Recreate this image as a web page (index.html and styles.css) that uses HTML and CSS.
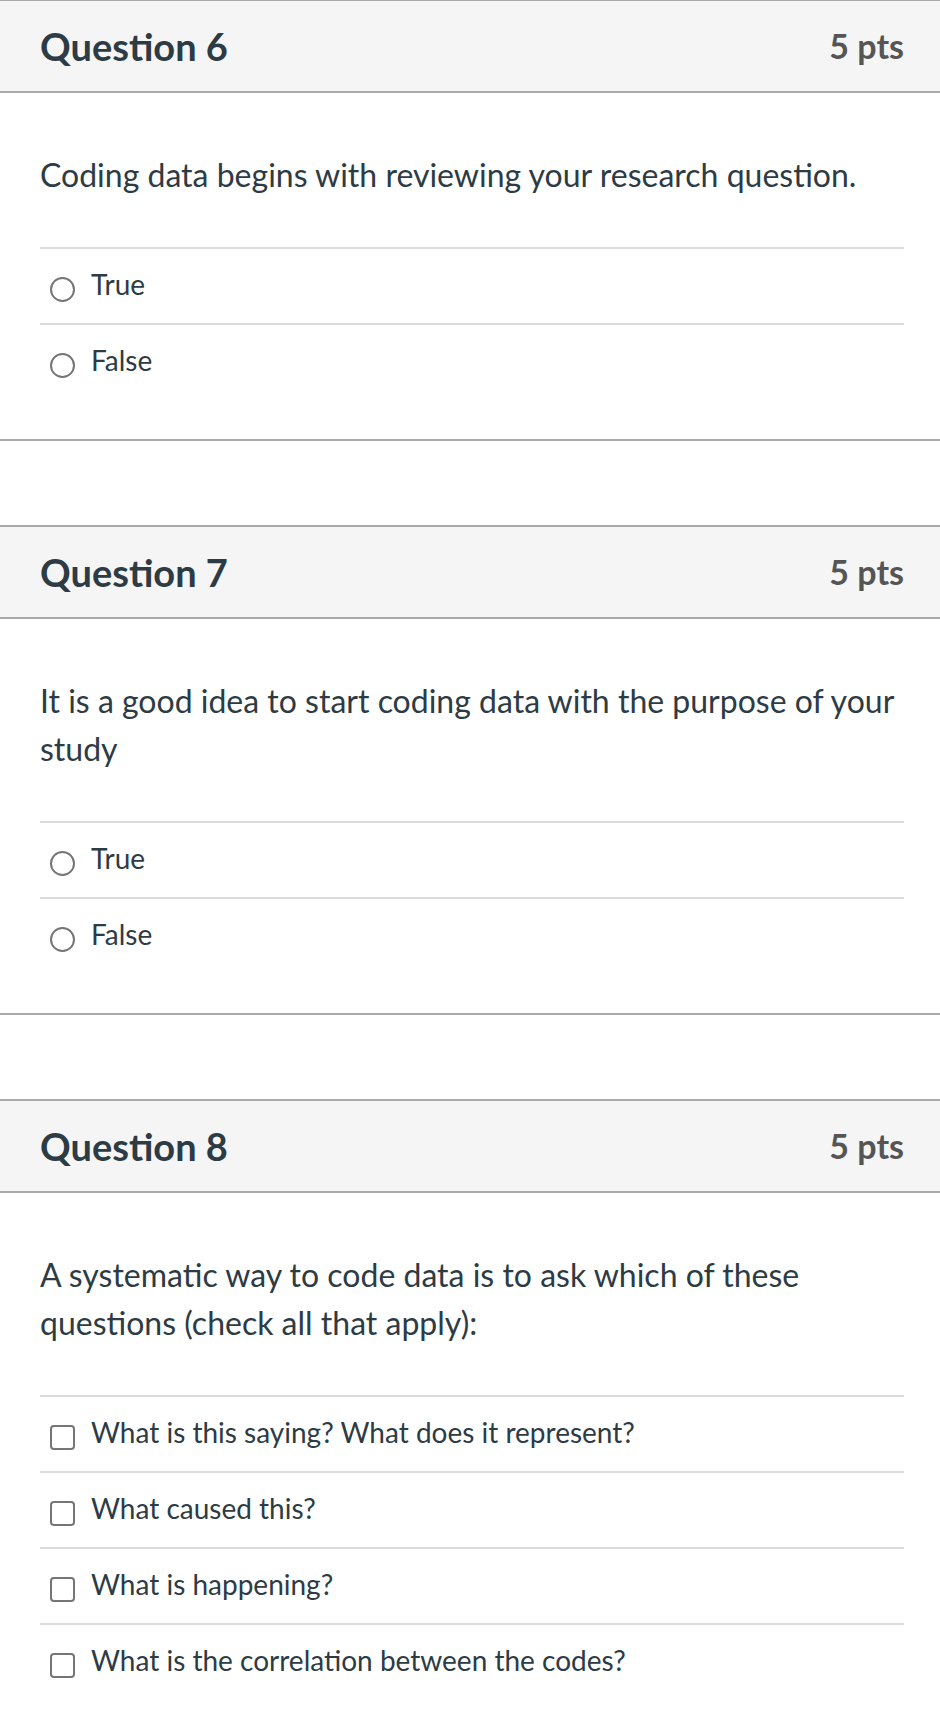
FILE: index.html
```html
<!DOCTYPE html>
<html lang="en">
<head>
<meta charset="utf-8">
<title>Quiz</title>
<link rel="stylesheet" href="styles.css">
</head>
<body>
<main class="quiz">
  <section class="question">
    <header class="q-header">
      <h2 class="q-title">Question 6</h2>
      <span class="q-points">5 pts</span>
    </header>
    <div class="q-body">
      <p class="q-text">Coding data begins with reviewing your research question.</p>
      <ul class="answers">
        <li class="answer"><span class="radio"></span><span class="label">True</span></li>
        <li class="answer"><span class="radio"></span><span class="label">False</span></li>
      </ul>
    </div>
  </section>
  <section class="question">
    <header class="q-header">
      <h2 class="q-title">Question 7</h2>
      <span class="q-points">5 pts</span>
    </header>
    <div class="q-body">
      <p class="q-text">It is a good idea to start coding data with the purpose of your study</p>
      <ul class="answers">
        <li class="answer"><span class="radio"></span><span class="label">True</span></li>
        <li class="answer"><span class="radio"></span><span class="label">False</span></li>
      </ul>
    </div>
  </section>
  <section class="question">
    <header class="q-header">
      <h2 class="q-title">Question 8</h2>
      <span class="q-points">5 pts</span>
    </header>
    <div class="q-body">
      <p class="q-text">A systematic way to code data is to ask which of these questions (check all that apply):</p>
      <ul class="answers">
        <li class="answer"><span class="checkbox"></span><span class="label">What is this saying? What does it represent?</span></li>
        <li class="answer"><span class="checkbox"></span><span class="label">What caused this?</span></li>
        <li class="answer"><span class="checkbox"></span><span class="label">What is happening?</span></li>
        <li class="answer"><span class="checkbox"></span><span class="label">What is the correlation between the codes?</span></li>
      </ul>
    </div>
  </section>
</main>
</body>
</html>
```
FILE: styles.css
```css
html, body {
  margin: 0;
  padding: 0;
  background: #ffffff;
}
body {
  font-family: Lato, "Open Sans", "Liberation Sans", sans-serif;
  color: #2d3b45;
}
.quiz {
  margin-top: -1px;
}
.question {
  border-top: 2px solid #a9a9a9;
  border-bottom: 2px solid #a9a9a9;
  margin-bottom: 84px;
}
.question:last-child {
  margin-bottom: 0;
}
.q-header {
  height: 90px;
  background: #f5f5f5;
  border-bottom: 2px solid #a9a9a9;
  display: flex;
  align-items: center;
  justify-content: space-between;
  padding: 0 36px 0 40px;
}
.q-title {
  margin: 0;
  font-size: 38px;
  font-weight: 700;
  line-height: 1;
  color: #2d3b45;
}
.q-points {
  font-size: 34px;
  font-weight: 700;
  color: #555555;
  line-height: 1;
}
.q-body {
  padding: 58px 36px 40px 40px;
}
.q-text {
  margin: 0 0 48px;
  font-size: 32px;
  line-height: 48px;
}
.answers {
  list-style: none;
  margin: 0;
  padding: 0;
}
.answer {
  display: flex;
  align-items: center;
  border-top: 2px solid #dcdcdc;
  padding: 16px 0 19px 10px;
  font-size: 28px;
  line-height: 39px;
}
.radio {
  flex: none;
  width: 21px;
  height: 21px;
  border: 2px solid #757575;
  border-radius: 50%;
  margin-top: 9px;
  margin-right: 16px;
}
.checkbox {
  flex: none;
  width: 21px;
  height: 21px;
  border: 2px solid #757575;
  border-radius: 4px;
  margin-top: 9px;
  margin-right: 16px;
}
```
